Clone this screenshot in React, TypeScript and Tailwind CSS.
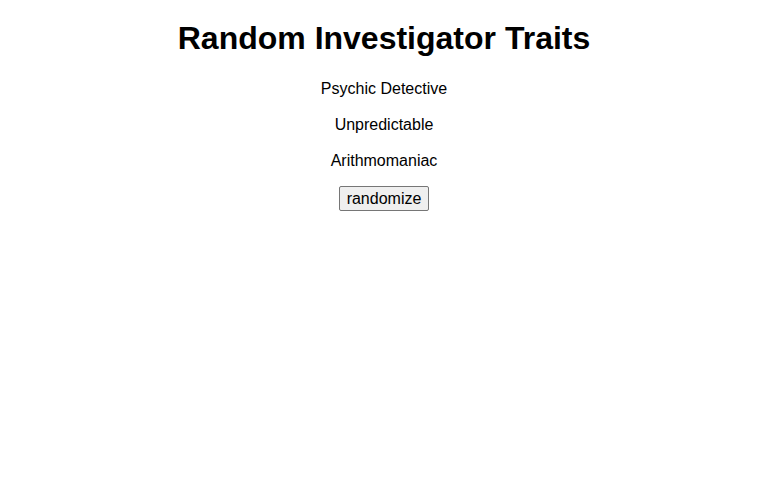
import React, { useState } from "react"

const TRAITS = [
  "Psychic Detective",
  "Unpredictable",
  "Arithmomaniac",
  "Stoic",
  "Insomniac",
  "Bookworm",
  "Paranoid",
  "Occultist",
]

const pick = (n: number) => {
  const pool = [...TRAITS]
  const out: string[] = []
  while (out.length < n && pool.length) {
    out.push(pool.splice(Math.floor(Math.random() * pool.length), 1)[0])
  }
  return out
}

const App: React.FC = () => {
  const [traits, setTraits] = useState<string[]>([
    "Psychic Detective",
    "Unpredictable",
    "Arithmomaniac",
  ])

  return (
    <div className="min-h-screen bg-white text-black text-center font-['Liberation_Sans',Arial,sans-serif]">
      <h1 className="pt-[20px] pb-[6px] text-[32px] font-bold leading-[37px]">
        Random Investigator Traits
      </h1>
      <div className="flex flex-col items-center">
        {traits.map((trait) => (
          <p key={trait} className="mt-4 text-base leading-[20px]">
            {trait}
          </p>
        ))}
        <button
          onClick={() => setTraits(pick(3))}
          className="mt-[15px] h-[25px] px-[7px] text-base leading-[20px] bg-[#efefef] border border-[#767676] rounded-[2px] hover:bg-[#e5e5e5]"
        >
          randomize
        </button>
      </div>
    </div>
  )
}

export default App
